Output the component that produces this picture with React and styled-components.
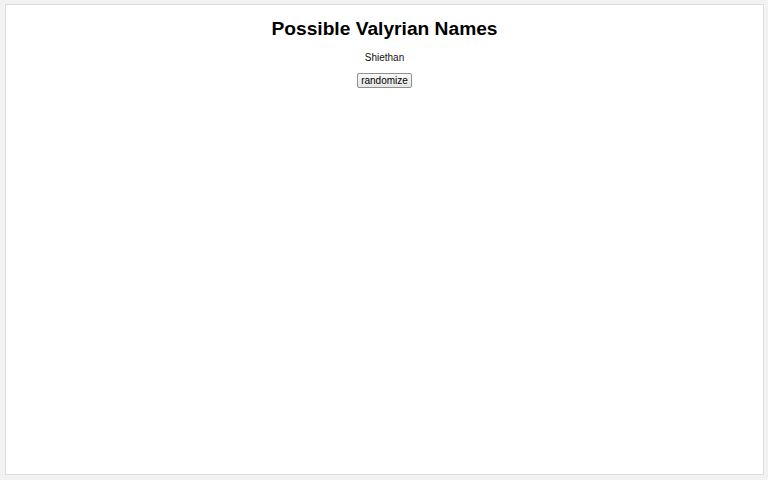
import React, { useState } from 'react';
import styled, { createGlobalStyle } from 'styled-components';

const GlobalStyle = createGlobalStyle`
	html, body {
		margin: 0;
		padding: 0;
		background: #f2f2f2;
		font-family: 'Liberation Sans', Arial, sans-serif;
	}
`;

const Page = styled.div`
	padding: 4px 4px 5px 5px;
	height: 480px;
	box-sizing: border-box;
`;

const Card = styled.div`
	height: 471px;
	box-sizing: border-box;
	background: #fff;
	border: 1px solid #dcdcdc;
	display: flex;
	flex-direction: column;
	align-items: center;
`;

const Title = styled.h1`
	margin: 13px 0 0;
	font-size: 19.2px;
	font-weight: bold;
	color: #000;
`;

const Name = styled.p`
	margin: 12px 0 0;
	font-size: 10px;
	color: #111;
`;

const Button = styled.button`
	margin-top: 10px;
	font-family: 'Liberation Sans', Arial, sans-serif;
	font-size: 10px;
	padding: 1px 3px;
	background: linear-gradient(#f8f8f8, #e6e6e6);
	border: 1px solid #8f8f8f;
	border-radius: 2px;
	color: #000;
`;

const names = ['Shiethan', 'Daenerys', 'Rhaegar', 'Aerion', 'Vaelor', 'Maegon', 'Jaehaera'];

const App = () => {
	const [index, setIndex] = useState(0);

	const randomize = () => setIndex(Math.floor(Math.random() * names.length));

	return (
		<>
			<GlobalStyle />
			<Page>
				<Card>
					<Title>Possible Valyrian Names</Title>
					<Name>{names[index]}</Name>
					<Button onClick={randomize}>randomize</Button>
				</Card>
			</Page>
		</>
	);
};

export default App;
